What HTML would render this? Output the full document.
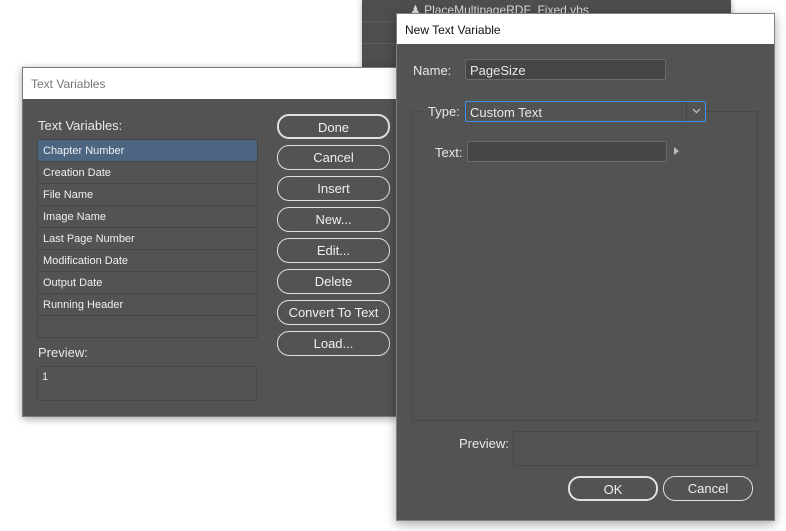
<!DOCTYPE html>
<html><head><style>
*{box-sizing:border-box;margin:0;padding:0}
body{width:786px;height:531px;background:#fff;position:relative;overflow:hidden;font-family:"Liberation Sans",sans-serif;color:#e8e8e8}
.a{position:absolute}
.btn{position:absolute;border:1.5px solid #e0e0e0;border-radius:12px;height:25px;font-size:13px;text-align:center;line-height:23px;color:#f0f0f0}
.row{height:22px;border-bottom:1px solid #454545;font-size:11px;padding-left:5px;line-height:22px;color:#f0f0f0}
</style></head><body>
<div class="a" style="left:362px;top:0;width:369px;height:67px;background:#4e4e4e;box-shadow:0 0 6px rgba(0,0,0,.3)"></div>
<div class="a" style="left:362px;top:21px;width:369px;height:1px;background:#5c5c5c"></div>
<div class="a" style="left:362px;top:43px;width:369px;height:1px;background:#5c5c5c"></div>
<div class="a" style="left:410px;top:3px;font-size:12px;color:#ddd">♟ PlaceMultipageRDF_Fixed.vbs</div>

<div class="a" style="left:22px;top:67px;width:376px;height:350px;background:#535353;border:1px solid #7a7a7a;box-shadow:0 2px 8px rgba(0,0,0,.35)">
<div style="height:31px;background:#fff;color:#777;font-size:12px;padding:9px 8px">Text Variables</div>
</div>
<div class="a" style="left:38px;top:118px;font-size:13px">Text Variables:</div>
<div class="a" style="left:37px;top:139px;width:221px;height:199px;border:1px solid #464646;background:#535353">
<div class="row" style="background:#4c6580">Chapter Number</div>
<div class="row">Creation Date</div><div class="row">File Name</div><div class="row">Image Name</div>
<div class="row">Last Page Number</div><div class="row">Modification Date</div><div class="row">Output Date</div><div class="row">Running Header</div>
</div>
<div class="a" style="left:38px;top:345px;font-size:13px">Preview:</div>
<div class="a" style="left:37px;top:366px;width:220px;height:35px;border:1px solid #484848;font-size:11px;padding:4px 4px">1</div>
<div class="btn" style="left:277px;top:114px;width:113px;border-width:2px">Done</div>
<div class="btn" style="left:277px;top:145px;width:113px">Cancel</div>
<div class="btn" style="left:277px;top:176px;width:113px">Insert</div>
<div class="btn" style="left:277px;top:207px;width:113px">New...</div>
<div class="btn" style="left:277px;top:238px;width:113px">Edit...</div>
<div class="btn" style="left:277px;top:269px;width:113px">Delete</div>
<div class="btn" style="left:277px;top:300px;width:113px">Convert To Text</div>
<div class="btn" style="left:277px;top:331px;width:113px">Load...</div>

<div class="a" style="left:396px;top:13px;width:379px;height:508px;background:#535353;border:1px solid #808080;box-shadow:0 3px 10px rgba(0,0,0,.35)">
<div style="height:30px;background:#fff;color:#111;font-size:12px;padding:9px 8px">New Text Variable</div>
</div>
<div class="a" style="left:413px;top:63px;font-size:13px">Name:</div>
<div class="a" style="left:465px;top:59px;width:201px;height:21px;background:#454545;border:1px solid #6a6a6a;border-radius:2px;font-size:13px;padding:3px 4px">PageSize</div>
<div class="a" style="left:412px;top:111px;width:346px;height:310px;border:1px solid #484848"></div>
<div class="a" style="left:422px;top:103px;width:42px;height:16px;background:#535353"></div>
<div class="a" style="left:428px;top:104px;font-size:13px">Type:</div>
<div class="a" style="left:465px;top:101px;width:241px;height:21px;background:#535353;border:1px solid #3a90ea;border-radius:2px;font-size:13px;padding:3px 4px">Custom Text</div>
<div class="a" style="left:686px;top:102px;width:1px;height:19px;background:#444"></div>
<svg class="a" style="left:692px;top:108px" width="9" height="6"><path d="M1 1 L4.5 4.5 L8 1" stroke="#ccc" stroke-width="1.2" fill="none"/></svg>
<div class="a" style="left:435px;top:145px;font-size:13px">Text:</div>
<div class="a" style="left:467px;top:141px;width:200px;height:21px;background:#464646;border:1px solid #6a6a6a;border-radius:2px"></div>
<div class="a" style="left:674px;top:147px;width:0;height:0;border-left:5px solid #bbb;border-top:4px solid transparent;border-bottom:4px solid transparent"></div>
<div class="a" style="left:459px;top:436px;font-size:13px">Preview:</div>
<div class="a" style="left:513px;top:431px;width:245px;height:35px;border:1px solid #484848"></div>
<div class="btn" style="left:568px;top:476px;width:90px;border-width:2px">OK</div>
<div class="btn" style="left:663px;top:476px;width:90px">Cancel</div>
</body></html>
